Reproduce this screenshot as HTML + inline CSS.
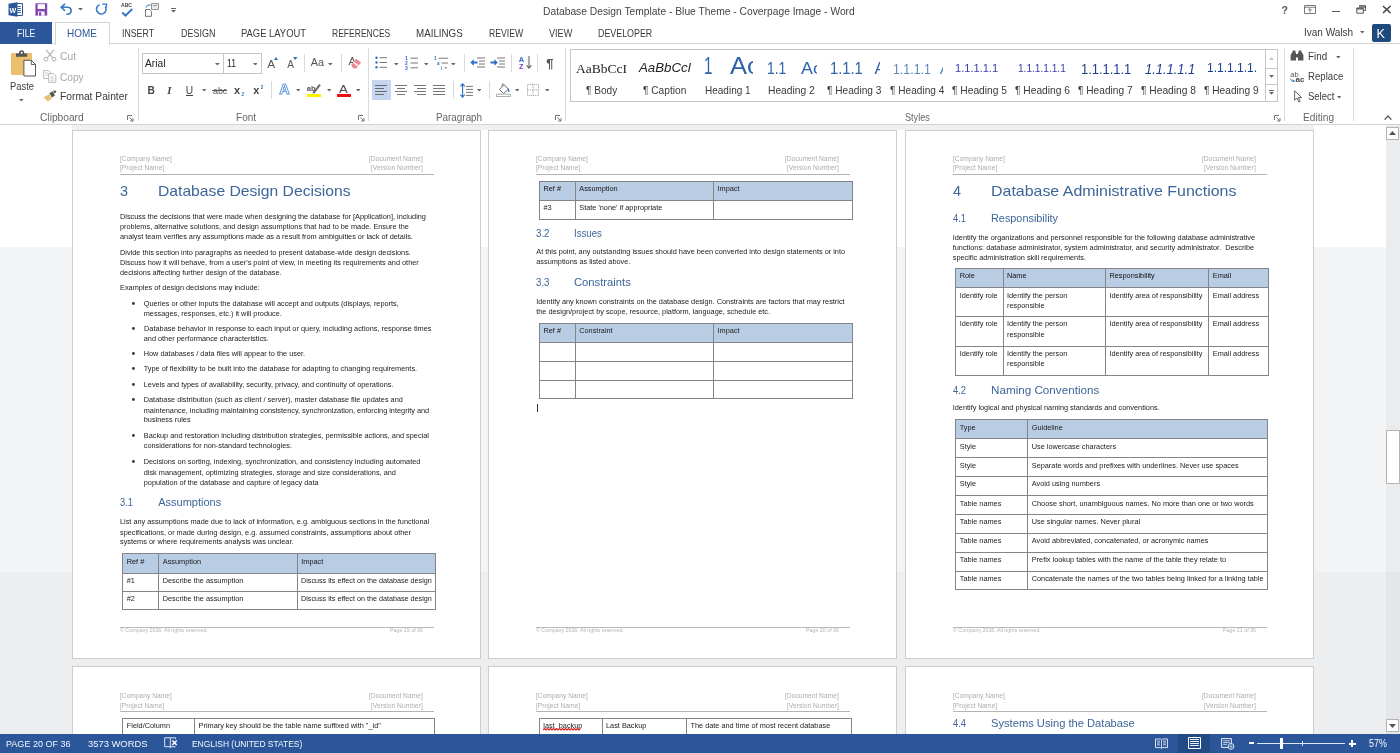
<!DOCTYPE html>
<html lang="en"><head><meta charset="utf-8"><title>Database Design Template - Word</title>
<style>
html,body{margin:0;padding:0}
body{width:1400px;height:753px;overflow:hidden;position:relative;background:#fff;font-family:"Liberation Sans",sans-serif}
#app{position:absolute;left:0;top:0;width:1400px;height:753px;overflow:hidden;will-change:transform}
.t{position:absolute;white-space:pre;margin:0;padding:0}
.r{position:absolute;box-sizing:border-box;margin:0;padding:0;display:block}
</style></head>
<body>
<div id="app">
<div class="r" style="left:0px;top:125px;width:1400px;height:122px;background:#ffffff;"></div>
<div class="r" style="left:0px;top:247px;width:1400px;height:325px;background:#f3f4f5;"></div>
<div class="r" style="left:0px;top:572px;width:1400px;height:162px;background:#edeef0;"></div>
<div class="r" style="left:72px;top:125px;width:1242px;height:5px;background:#eff0f2;"></div>
<div class="r" style="left:1386px;top:125px;width:14px;height:447px;background:#ebecee;"></div>
<div class="r" style="left:1386px;top:572px;width:14px;height:162px;background:#e5e6e8;"></div>
<div class="r" style="left:1386px;top:127px;width:13px;height:13px;background:#fff;border:1px solid #b4b4b4;"></div>
<svg class="r" style="left:1389px;top:131px" width="7" height="4" viewBox="0 0 7 4"><path d="M0 4H7L3.5 0Z" fill="#555"/></svg>
<div class="r" style="left:1386px;top:719px;width:13px;height:13px;background:#fff;border:1px solid #b4b4b4;"></div>
<svg class="r" style="left:1389px;top:724px" width="7" height="4" viewBox="0 0 7 4"><path d="M0 0H7L3.5 4Z" fill="#555"/></svg>
<div class="r" style="left:1386px;top:430px;width:14px;height:54px;background:#fff;border:1px solid #b4b4b4;"></div>
<div class="r" style="left:72px;top:130px;width:409px;height:529px;background:#fff;border:1px solid #cdcdcd;"></div>
<div class="t" style='left:120.00px;top:155px;font:400 6.5px "Liberation Sans", sans-serif;line-height:7px;color:#adadad;transform:scaleX(1.0232);transform-origin:0 0;'>[Company Name]</div>
<div class="t" style='left:120.00px;top:164px;font:400 6.5px "Liberation Sans", sans-serif;line-height:7px;color:#adadad;transform:scaleX(1.0294);transform-origin:0 0;'>[Project Name]</div>
<div class="t" style='left:369.25px;top:155px;font:400 6.5px "Liberation Sans", sans-serif;line-height:7px;color:#adadad;transform:scaleX(1.0261);transform-origin:0 0;'>[Document Name]</div>
<div class="t" style='left:371.25px;top:164px;font:400 6.5px "Liberation Sans", sans-serif;line-height:7px;color:#adadad;transform:scaleX(1.0305);transform-origin:0 0;'>[Version Number]</div>
<div class="r" style="left:120px;top:174px;width:314px;height:1px;background:#b4b4b4;"></div>
<div class="t" style='left:120.00px;top:183px;font:400 14.4px "Liberation Sans", sans-serif;line-height:16px;color:#3d6598;'>3</div>
<div class="t" style='left:158.20px;top:183px;font:400 14.4px "Liberation Sans", sans-serif;line-height:16px;color:#3d6598;transform:scaleX(1.0892);transform-origin:0 0;'>Database Design Decisions</div>
<div class="t" style='left:120.00px;top:212px;font:400 7.34px "Liberation Sans", sans-serif;line-height:9px;color:#1b1b1b;'>Discuss the decisions that were made when designing the database for [Application], including</div>
<div class="t" style='left:120.00px;top:222px;font:400 7.34px "Liberation Sans", sans-serif;line-height:9px;color:#1b1b1b;'>problems, alternative solutions, and design assumptions that had to be made. Ensure the</div>
<div class="t" style='left:120.00px;top:232px;font:400 7.34px "Liberation Sans", sans-serif;line-height:9px;color:#1b1b1b;'>analyst team verifies any assumptions made as a result from ambiguities or lack of details.</div>
<div class="t" style='left:120.00px;top:248px;font:400 7.34px "Liberation Sans", sans-serif;line-height:9px;color:#1b1b1b;'>Divide this section into paragraphs as needed to present database-wide design decisions.</div>
<div class="t" style='left:120.00px;top:258px;font:400 7.34px "Liberation Sans", sans-serif;line-height:9px;color:#1b1b1b;'>Discuss how it will behave, from a user's point of view, in meeting its requirements and other</div>
<div class="t" style='left:120.00px;top:268px;font:400 7.34px "Liberation Sans", sans-serif;line-height:9px;color:#1b1b1b;'>decisions affecting further design of the database.</div>
<div class="t" style='left:120.00px;top:283px;font:400 7.34px "Liberation Sans", sans-serif;line-height:9px;color:#1b1b1b;'>Examples of design decisions may include:</div>
<div class="t" style='left:143.75px;top:299px;font:400 7.34px "Liberation Sans", sans-serif;line-height:9px;color:#1b1b1b;'>Queries or other inputs the database will accept and outputs (displays, reports,</div>
<div class="t" style='left:143.75px;top:309px;font:400 7.34px "Liberation Sans", sans-serif;line-height:9px;color:#1b1b1b;'>messages, responses, etc.) it will produce.</div>
<div class="t" style='left:143.75px;top:324px;font:400 7.34px "Liberation Sans", sans-serif;line-height:9px;color:#1b1b1b;transform:scaleX(1.0058);transform-origin:0 0;'>Database behavior in response to each input or query, including actions, response times</div>
<div class="t" style='left:143.75px;top:334px;font:400 7.34px "Liberation Sans", sans-serif;line-height:9px;color:#1b1b1b;'>and other performance characteristics.</div>
<div class="t" style='left:143.75px;top:349px;font:400 7.34px "Liberation Sans", sans-serif;line-height:9px;color:#1b1b1b;'>How databases / data files will appear to the user.</div>
<div class="t" style='left:143.75px;top:364px;font:400 7.34px "Liberation Sans", sans-serif;line-height:9px;color:#1b1b1b;'>Type of flexibility to be built into the database for adapting to changing requirements.</div>
<div class="t" style='left:143.75px;top:380px;font:400 7.34px "Liberation Sans", sans-serif;line-height:9px;color:#1b1b1b;'>Levels and types of availability, security, privacy, and continuity of operations.</div>
<div class="t" style='left:143.75px;top:395px;font:400 7.34px "Liberation Sans", sans-serif;line-height:9px;color:#1b1b1b;'>Database distribution (such as client / server), master database file updates and</div>
<div class="t" style='left:143.75px;top:406px;font:400 7.34px "Liberation Sans", sans-serif;line-height:9px;color:#1b1b1b;'>maintenance, including maintaining consistency, synchronization, enforcing integrity and</div>
<div class="t" style='left:143.75px;top:415px;font:400 7.34px "Liberation Sans", sans-serif;line-height:9px;color:#1b1b1b;'>business rules</div>
<div class="t" style='left:143.75px;top:431px;font:400 7.34px "Liberation Sans", sans-serif;line-height:9px;color:#1b1b1b;'>Backup and restoration including distribution strategies, permissible actions, and special</div>
<div class="t" style='left:143.75px;top:441px;font:400 7.34px "Liberation Sans", sans-serif;line-height:9px;color:#1b1b1b;'>considerations for non-standard technologies.</div>
<div class="t" style='left:143.75px;top:457px;font:400 7.34px "Liberation Sans", sans-serif;line-height:9px;color:#1b1b1b;'>Decisions on sorting, indexing, synchronization, and consistency including automated</div>
<div class="t" style='left:143.75px;top:468px;font:400 7.34px "Liberation Sans", sans-serif;line-height:9px;color:#1b1b1b;'>disk management, optimizing strategies, storage and size considerations, and</div>
<div class="t" style='left:143.75px;top:478px;font:400 7.34px "Liberation Sans", sans-serif;line-height:9px;color:#1b1b1b;'>population of the database and capture of legacy data</div>
<div class="t" style='left:120.00px;top:517px;font:400 7.34px "Liberation Sans", sans-serif;line-height:9px;color:#1b1b1b;'>List any assumptions made due to lack of information, e.g. ambiguous sections in the functional</div>
<div class="t" style='left:120.00px;top:528px;font:400 7.34px "Liberation Sans", sans-serif;line-height:9px;color:#1b1b1b;'>specifications, or made during design, e.g. assumed constraints, assumptions about other</div>
<div class="t" style='left:120.00px;top:537px;font:400 7.34px "Liberation Sans", sans-serif;line-height:9px;color:#1b1b1b;'>systems or where requirements analysis was unclear.</div>
<svg class="r" style="left:131px;top:301px" width="5" height="5" viewBox="0 0 5 5"><circle cx="2.4" cy="2.5" r="1.4" fill="#333"/></svg>
<svg class="r" style="left:131px;top:326px" width="5" height="5" viewBox="0 0 5 5"><circle cx="2.4" cy="2.5" r="1.4" fill="#333"/></svg>
<svg class="r" style="left:131px;top:351px" width="5" height="5" viewBox="0 0 5 5"><circle cx="2.4" cy="2.5" r="1.4" fill="#333"/></svg>
<svg class="r" style="left:131px;top:366px" width="5" height="5" viewBox="0 0 5 5"><circle cx="2.4" cy="2.5" r="1.4" fill="#333"/></svg>
<svg class="r" style="left:131px;top:382px" width="5" height="5" viewBox="0 0 5 5"><circle cx="2.4" cy="2.5" r="1.4" fill="#333"/></svg>
<svg class="r" style="left:131px;top:397px" width="5" height="5" viewBox="0 0 5 5"><circle cx="2.4" cy="2.5" r="1.4" fill="#333"/></svg>
<svg class="r" style="left:131px;top:433px" width="5" height="5" viewBox="0 0 5 5"><circle cx="2.4" cy="2.5" r="1.4" fill="#333"/></svg>
<svg class="r" style="left:131px;top:459px" width="5" height="5" viewBox="0 0 5 5"><circle cx="2.4" cy="2.5" r="1.4" fill="#333"/></svg>
<div class="t" style='left:120.00px;top:496px;font:400 11px "Liberation Sans", sans-serif;line-height:12px;color:#3d6598;transform:scaleX(0.8501);transform-origin:0 0;'>3.1</div>
<div class="t" style='left:158.20px;top:496px;font:400 11px "Liberation Sans", sans-serif;line-height:12px;color:#3d6598;'>Assumptions</div>
<div class="r" style="left:122px;top:553px;width:314px;height:21px;background:#b8cce4;"></div>
<div class="r" style="left:122px;top:553px;width:314px;height:1px;background:#858585;"></div>
<div class="r" style="left:122px;top:573px;width:314px;height:1px;background:#858585;"></div>
<div class="r" style="left:122px;top:591px;width:314px;height:1px;background:#858585;"></div>
<div class="r" style="left:122px;top:609px;width:314px;height:1px;background:#858585;"></div>
<div class="r" style="left:122px;top:553px;width:1px;height:57px;background:#858585;"></div>
<div class="r" style="left:158px;top:553px;width:1px;height:57px;background:#858585;"></div>
<div class="r" style="left:297px;top:553px;width:1px;height:57px;background:#858585;"></div>
<div class="r" style="left:435px;top:553px;width:1px;height:57px;background:#858585;"></div>
<div class="t" style='left:126.75px;top:557px;font:400 7.34px "Liberation Sans", sans-serif;line-height:9px;color:#111;'>Ref #</div>
<div class="t" style='left:162.75px;top:557px;font:400 7.34px "Liberation Sans", sans-serif;line-height:9px;color:#1b1b1b;'>Assumption</div>
<div class="t" style='left:301.25px;top:557px;font:400 7.34px "Liberation Sans", sans-serif;line-height:9px;color:#1b1b1b;'>Impact</div>
<div class="t" style='left:126.75px;top:576px;font:400 7.34px "Liberation Sans", sans-serif;line-height:9px;color:#1b1b1b;'>#1</div>
<div class="t" style='left:162.75px;top:576px;font:400 7.34px "Liberation Sans", sans-serif;line-height:9px;color:#1b1b1b;'>Describe the assumption</div>
<div class="t" style='left:301.25px;top:576px;font:400 7.34px "Liberation Sans", sans-serif;line-height:9px;color:#1b1b1b;transform:scaleX(0.9825);transform-origin:0 0;'>Discuss its effect on the database design</div>
<div class="t" style='left:126.75px;top:594px;font:400 7.34px "Liberation Sans", sans-serif;line-height:9px;color:#1b1b1b;'>#2</div>
<div class="t" style='left:162.75px;top:594px;font:400 7.34px "Liberation Sans", sans-serif;line-height:9px;color:#1b1b1b;'>Describe the assumption</div>
<div class="t" style='left:301.25px;top:594px;font:400 7.34px "Liberation Sans", sans-serif;line-height:9px;color:#1b1b1b;transform:scaleX(0.9825);transform-origin:0 0;'>Discuss its effect on the database design</div>
<div class="r" style="left:120px;top:627px;width:314px;height:1px;background:#b9b9b9;"></div>
<div class="t" style='left:120.00px;top:627px;font:400 5.3px "Liberation Sans", sans-serif;line-height:6px;color:#b4b4b4;'>© Company 2016. All rights reserved.</div>
<div class="t" style='left:390.00px;top:627px;font:400 5.3px "Liberation Sans", sans-serif;line-height:6px;color:#b4b4b4;'>Page 19 of 36</div>
<div class="r" style="left:488px;top:130px;width:409px;height:529px;background:#fff;border:1px solid #cdcdcd;"></div>
<div class="t" style='left:536.00px;top:155px;font:400 6.5px "Liberation Sans", sans-serif;line-height:7px;color:#adadad;transform:scaleX(1.0232);transform-origin:0 0;'>[Company Name]</div>
<div class="t" style='left:536.00px;top:164px;font:400 6.5px "Liberation Sans", sans-serif;line-height:7px;color:#adadad;transform:scaleX(1.0294);transform-origin:0 0;'>[Project Name]</div>
<div class="t" style='left:785.25px;top:155px;font:400 6.5px "Liberation Sans", sans-serif;line-height:7px;color:#adadad;transform:scaleX(1.0261);transform-origin:0 0;'>[Document Name]</div>
<div class="t" style='left:787.25px;top:164px;font:400 6.5px "Liberation Sans", sans-serif;line-height:7px;color:#adadad;transform:scaleX(1.0305);transform-origin:0 0;'>[Version Number]</div>
<div class="r" style="left:536px;top:174px;width:314px;height:1px;background:#b4b4b4;"></div>
<div class="r" style="left:539px;top:181px;width:314px;height:20px;background:#b8cce4;"></div>
<div class="r" style="left:539px;top:181px;width:314px;height:1px;background:#858585;"></div>
<div class="r" style="left:539px;top:200px;width:314px;height:1px;background:#858585;"></div>
<div class="r" style="left:539px;top:219px;width:314px;height:1px;background:#858585;"></div>
<div class="r" style="left:539px;top:181px;width:1px;height:39px;background:#858585;"></div>
<div class="r" style="left:575px;top:181px;width:1px;height:39px;background:#858585;"></div>
<div class="r" style="left:713px;top:181px;width:1px;height:39px;background:#858585;"></div>
<div class="r" style="left:852px;top:181px;width:1px;height:39px;background:#858585;"></div>
<div class="t" style='left:543.50px;top:184px;font:400 7.34px "Liberation Sans", sans-serif;line-height:9px;color:#111;'>Ref #</div>
<div class="t" style='left:579.25px;top:184px;font:400 7.34px "Liberation Sans", sans-serif;line-height:9px;color:#1b1b1b;'>Assumption</div>
<div class="t" style='left:717.50px;top:184px;font:400 7.34px "Liberation Sans", sans-serif;line-height:9px;color:#1b1b1b;'>Impact</div>
<div class="t" style='left:543.50px;top:203px;font:400 7.34px "Liberation Sans", sans-serif;line-height:9px;color:#1b1b1b;'>#3</div>
<div class="t" style='left:579.25px;top:203px;font:400 7.34px "Liberation Sans", sans-serif;line-height:9px;color:#1b1b1b;'>State 'none' if appropriate</div>
<div class="t" style='left:536.00px;top:227px;font:400 11px "Liberation Sans", sans-serif;line-height:12px;color:#3d6598;transform:scaleX(0.8828);transform-origin:0 0;'>3.2</div>
<div class="t" style='left:574.20px;top:227px;font:400 11px "Liberation Sans", sans-serif;line-height:12px;color:#3d6598;transform:scaleX(0.8744);transform-origin:0 0;'>Issues</div>
<div class="t" style='left:536.25px;top:247px;font:400 7.34px "Liberation Sans", sans-serif;line-height:9px;color:#1b1b1b;'>At this point, any outstanding issues should have been converted into design statements or into</div>
<div class="t" style='left:536.25px;top:257px;font:400 7.34px "Liberation Sans", sans-serif;line-height:9px;color:#1b1b1b;'>assumptions as listed above.</div>
<div class="t" style='left:536.00px;top:276px;font:400 11px "Liberation Sans", sans-serif;line-height:12px;color:#3d6598;transform:scaleX(0.8828);transform-origin:0 0;'>3.3</div>
<div class="t" style='left:574.20px;top:276px;font:400 11px "Liberation Sans", sans-serif;line-height:12px;color:#3d6598;transform:scaleX(1.0210);transform-origin:0 0;'>Constraints</div>
<div class="t" style='left:536.25px;top:297px;font:400 7.34px "Liberation Sans", sans-serif;line-height:9px;color:#1b1b1b;'>Identify any known constraints on the database design. Constraints are factors that may restrict</div>
<div class="t" style='left:536.25px;top:307px;font:400 7.34px "Liberation Sans", sans-serif;line-height:9px;color:#1b1b1b;'>the design/project by scope, resource, platform, language, schedule etc.</div>
<div class="r" style="left:539px;top:323px;width:314px;height:20px;background:#b8cce4;"></div>
<div class="r" style="left:539px;top:323px;width:314px;height:1px;background:#858585;"></div>
<div class="r" style="left:539px;top:342px;width:314px;height:1px;background:#858585;"></div>
<div class="r" style="left:539px;top:361px;width:314px;height:1px;background:#858585;"></div>
<div class="r" style="left:539px;top:380px;width:314px;height:1px;background:#858585;"></div>
<div class="r" style="left:539px;top:398px;width:314px;height:1px;background:#858585;"></div>
<div class="r" style="left:539px;top:323px;width:1px;height:76px;background:#858585;"></div>
<div class="r" style="left:575px;top:323px;width:1px;height:76px;background:#858585;"></div>
<div class="r" style="left:713px;top:323px;width:1px;height:76px;background:#858585;"></div>
<div class="r" style="left:852px;top:323px;width:1px;height:76px;background:#858585;"></div>
<div class="t" style='left:543.50px;top:326px;font:400 7.34px "Liberation Sans", sans-serif;line-height:9px;color:#111;'>Ref #</div>
<div class="t" style='left:579.25px;top:326px;font:400 7.34px "Liberation Sans", sans-serif;line-height:9px;color:#1b1b1b;'>Constraint</div>
<div class="t" style='left:717.50px;top:326px;font:400 7.34px "Liberation Sans", sans-serif;line-height:9px;color:#1b1b1b;'>Impact</div>
<div class="r" style="left:536.5px;top:404px;width:1px;height:7.5px;background:#333;"></div>
<div class="r" style="left:536px;top:627px;width:314px;height:1px;background:#b9b9b9;"></div>
<div class="t" style='left:536.00px;top:627px;font:400 5.3px "Liberation Sans", sans-serif;line-height:6px;color:#b4b4b4;'>© Company 2016. All rights reserved.</div>
<div class="t" style='left:806.00px;top:627px;font:400 5.3px "Liberation Sans", sans-serif;line-height:6px;color:#b4b4b4;'>Page 20 of 36</div>
<div class="r" style="left:905px;top:130px;width:409px;height:529px;background:#fff;border:1px solid #cdcdcd;"></div>
<div class="t" style='left:953.00px;top:155px;font:400 6.5px "Liberation Sans", sans-serif;line-height:7px;color:#adadad;transform:scaleX(1.0232);transform-origin:0 0;'>[Company Name]</div>
<div class="t" style='left:953.00px;top:164px;font:400 6.5px "Liberation Sans", sans-serif;line-height:7px;color:#adadad;transform:scaleX(1.0294);transform-origin:0 0;'>[Project Name]</div>
<div class="t" style='left:1202.25px;top:155px;font:400 6.5px "Liberation Sans", sans-serif;line-height:7px;color:#adadad;transform:scaleX(1.0261);transform-origin:0 0;'>[Document Name]</div>
<div class="t" style='left:1204.25px;top:164px;font:400 6.5px "Liberation Sans", sans-serif;line-height:7px;color:#adadad;transform:scaleX(1.0305);transform-origin:0 0;'>[Version Number]</div>
<div class="r" style="left:953px;top:174px;width:314px;height:1px;background:#b4b4b4;"></div>
<div class="t" style='left:953.00px;top:183px;font:400 14.4px "Liberation Sans", sans-serif;line-height:16px;color:#3d6598;'>4</div>
<div class="t" style='left:991.20px;top:183px;font:400 14.4px "Liberation Sans", sans-serif;line-height:16px;color:#3d6598;transform:scaleX(1.1077);transform-origin:0 0;'>Database Administrative Functions</div>
<div class="t" style='left:953.00px;top:212px;font:400 11px "Liberation Sans", sans-serif;line-height:12px;color:#3d6598;transform:scaleX(0.8501);transform-origin:0 0;'>4.1</div>
<div class="t" style='left:991.20px;top:212px;font:400 11px "Liberation Sans", sans-serif;line-height:12px;color:#3d6598;transform:scaleX(0.9880);transform-origin:0 0;'>Responsibility</div>
<div class="t" style='left:952.75px;top:233px;font:400 7.34px "Liberation Sans", sans-serif;line-height:9px;color:#1b1b1b;'>Identify the organizations and personnel responsible for the following database administrative</div>
<div class="t" style='left:952.75px;top:243px;font:400 7.34px "Liberation Sans", sans-serif;line-height:9px;color:#1b1b1b;'>functions: database administrator, system administrator, and security administrator.  Describe</div>
<div class="t" style='left:952.75px;top:253px;font:400 7.34px "Liberation Sans", sans-serif;line-height:9px;color:#1b1b1b;'>specific administration skill requirements.</div>
<div class="r" style="left:955px;top:268px;width:314px;height:20px;background:#b8cce4;"></div>
<div class="r" style="left:955px;top:268px;width:314px;height:1px;background:#858585;"></div>
<div class="r" style="left:955px;top:287px;width:314px;height:1px;background:#858585;"></div>
<div class="r" style="left:955px;top:316px;width:314px;height:1px;background:#858585;"></div>
<div class="r" style="left:955px;top:346px;width:314px;height:1px;background:#858585;"></div>
<div class="r" style="left:955px;top:375px;width:314px;height:1px;background:#858585;"></div>
<div class="r" style="left:955px;top:268px;width:1px;height:108px;background:#858585;"></div>
<div class="r" style="left:1003px;top:268px;width:1px;height:108px;background:#858585;"></div>
<div class="r" style="left:1105px;top:268px;width:1px;height:108px;background:#858585;"></div>
<div class="r" style="left:1208px;top:268px;width:1px;height:108px;background:#858585;"></div>
<div class="r" style="left:1268px;top:268px;width:1px;height:108px;background:#858585;"></div>
<div class="t" style='left:959.75px;top:271px;font:400 7.34px "Liberation Sans", sans-serif;line-height:9px;color:#111;'>Role</div>
<div class="t" style='left:1007.00px;top:271px;font:400 7.34px "Liberation Sans", sans-serif;line-height:9px;color:#111;'>Name</div>
<div class="t" style='left:1109.50px;top:271px;font:400 7.34px "Liberation Sans", sans-serif;line-height:9px;color:#111;'>Responsibility</div>
<div class="t" style='left:1212.75px;top:271px;font:400 7.34px "Liberation Sans", sans-serif;line-height:9px;color:#111;'>Email</div>
<div class="t" style='left:959.75px;top:291px;font:400 7.34px "Liberation Sans", sans-serif;line-height:9px;color:#1b1b1b;'>Identify role</div>
<div class="t" style='left:1007.00px;top:291px;font:400 7.34px "Liberation Sans", sans-serif;line-height:9px;color:#1b1b1b;'>Identify the person</div>
<div class="t" style='left:1007.00px;top:301px;font:400 7.34px "Liberation Sans", sans-serif;line-height:9px;color:#1b1b1b;'>responsible</div>
<div class="t" style='left:1109.50px;top:291px;font:400 7.34px "Liberation Sans", sans-serif;line-height:9px;color:#1b1b1b;'>Identify area of responsibility</div>
<div class="t" style='left:1212.75px;top:291px;font:400 7.34px "Liberation Sans", sans-serif;line-height:9px;color:#1b1b1b;'>Email address</div>
<div class="t" style='left:959.75px;top:319px;font:400 7.34px "Liberation Sans", sans-serif;line-height:9px;color:#1b1b1b;'>Identify role</div>
<div class="t" style='left:1007.00px;top:319px;font:400 7.34px "Liberation Sans", sans-serif;line-height:9px;color:#1b1b1b;'>Identify the person</div>
<div class="t" style='left:1007.00px;top:330px;font:400 7.34px "Liberation Sans", sans-serif;line-height:9px;color:#1b1b1b;'>responsible</div>
<div class="t" style='left:1109.50px;top:319px;font:400 7.34px "Liberation Sans", sans-serif;line-height:9px;color:#1b1b1b;'>Identify area of responsibility</div>
<div class="t" style='left:1212.75px;top:319px;font:400 7.34px "Liberation Sans", sans-serif;line-height:9px;color:#1b1b1b;'>Email address</div>
<div class="t" style='left:959.75px;top:349px;font:400 7.34px "Liberation Sans", sans-serif;line-height:9px;color:#1b1b1b;'>Identify role</div>
<div class="t" style='left:1007.00px;top:349px;font:400 7.34px "Liberation Sans", sans-serif;line-height:9px;color:#1b1b1b;'>Identify the person</div>
<div class="t" style='left:1007.00px;top:359px;font:400 7.34px "Liberation Sans", sans-serif;line-height:9px;color:#1b1b1b;'>responsible</div>
<div class="t" style='left:1109.50px;top:349px;font:400 7.34px "Liberation Sans", sans-serif;line-height:9px;color:#1b1b1b;'>Identify area of responsibility</div>
<div class="t" style='left:1212.75px;top:349px;font:400 7.34px "Liberation Sans", sans-serif;line-height:9px;color:#1b1b1b;'>Email address</div>
<div class="t" style='left:953.00px;top:384px;font:400 11px "Liberation Sans", sans-serif;line-height:12px;color:#3d6598;transform:scaleX(0.8501);transform-origin:0 0;'>4.2</div>
<div class="t" style='left:991.20px;top:384px;font:400 11px "Liberation Sans", sans-serif;line-height:12px;color:#3d6598;transform:scaleX(1.0606);transform-origin:0 0;'>Naming Conventions</div>
<div class="t" style='left:952.75px;top:403px;font:400 7.34px "Liberation Sans", sans-serif;line-height:9px;color:#1b1b1b;'>Identify logical and physical naming standards and conventions.</div>
<div class="r" style="left:955px;top:419px;width:313px;height:20px;background:#b8cce4;"></div>
<div class="r" style="left:955px;top:419px;width:313px;height:1px;background:#858585;"></div>
<div class="r" style="left:955px;top:438px;width:313px;height:1px;background:#858585;"></div>
<div class="r" style="left:955px;top:457px;width:313px;height:1px;background:#858585;"></div>
<div class="r" style="left:955px;top:476px;width:313px;height:1px;background:#858585;"></div>
<div class="r" style="left:955px;top:495px;width:313px;height:1px;background:#858585;"></div>
<div class="r" style="left:955px;top:514px;width:313px;height:1px;background:#858585;"></div>
<div class="r" style="left:955px;top:533px;width:313px;height:1px;background:#858585;"></div>
<div class="r" style="left:955px;top:552px;width:313px;height:1px;background:#858585;"></div>
<div class="r" style="left:955px;top:571px;width:313px;height:1px;background:#858585;"></div>
<div class="r" style="left:955px;top:589px;width:313px;height:1px;background:#858585;"></div>
<div class="r" style="left:955px;top:419px;width:1px;height:171px;background:#858585;"></div>
<div class="r" style="left:1027px;top:419px;width:1px;height:171px;background:#858585;"></div>
<div class="r" style="left:1267px;top:419px;width:1px;height:171px;background:#858585;"></div>
<div class="t" style='left:959.75px;top:423px;font:400 7.34px "Liberation Sans", sans-serif;line-height:9px;color:#1b1b1b;'>Type</div>
<div class="t" style='left:1031.75px;top:423px;font:400 7.34px "Liberation Sans", sans-serif;line-height:9px;color:#1b1b1b;'>Guideline</div>
<div class="t" style='left:959.75px;top:442px;font:400 7.34px "Liberation Sans", sans-serif;line-height:9px;color:#1b1b1b;'>Style</div>
<div class="t" style='left:1031.75px;top:442px;font:400 7.34px "Liberation Sans", sans-serif;line-height:9px;color:#1b1b1b;'>Use lowercase characters</div>
<div class="t" style='left:959.75px;top:461px;font:400 7.34px "Liberation Sans", sans-serif;line-height:9px;color:#1b1b1b;'>Style</div>
<div class="t" style='left:1031.75px;top:461px;font:400 7.34px "Liberation Sans", sans-serif;line-height:9px;color:#1b1b1b;'>Separate words and prefixes with underlines. Never use spaces</div>
<div class="t" style='left:959.75px;top:479px;font:400 7.34px "Liberation Sans", sans-serif;line-height:9px;color:#1b1b1b;'>Style</div>
<div class="t" style='left:1031.75px;top:479px;font:400 7.34px "Liberation Sans", sans-serif;line-height:9px;color:#1b1b1b;'>Avoid using numbers</div>
<div class="t" style='left:959.75px;top:499px;font:400 7.34px "Liberation Sans", sans-serif;line-height:9px;color:#1b1b1b;'>Table names</div>
<div class="t" style='left:1031.75px;top:499px;font:400 7.34px "Liberation Sans", sans-serif;line-height:9px;color:#1b1b1b;'>Choose short, unambiguous names. No more than one or two words</div>
<div class="t" style='left:959.75px;top:517px;font:400 7.34px "Liberation Sans", sans-serif;line-height:9px;color:#1b1b1b;'>Table names</div>
<div class="t" style='left:1031.75px;top:517px;font:400 7.34px "Liberation Sans", sans-serif;line-height:9px;color:#1b1b1b;'>Use singular names. Never plural</div>
<div class="t" style='left:959.75px;top:536px;font:400 7.34px "Liberation Sans", sans-serif;line-height:9px;color:#1b1b1b;'>Table names</div>
<div class="t" style='left:1031.75px;top:536px;font:400 7.34px "Liberation Sans", sans-serif;line-height:9px;color:#1b1b1b;'>Avoid abbreviated, concatenated, or acronymic names</div>
<div class="t" style='left:959.75px;top:555px;font:400 7.34px "Liberation Sans", sans-serif;line-height:9px;color:#1b1b1b;'>Table names</div>
<div class="t" style='left:1031.75px;top:555px;font:400 7.34px "Liberation Sans", sans-serif;line-height:9px;color:#1b1b1b;'>Prefix lookup tables with the name of the table they relate to</div>
<div class="t" style='left:959.75px;top:574px;font:400 7.34px "Liberation Sans", sans-serif;line-height:9px;color:#1b1b1b;'>Table names</div>
<div class="t" style='left:1031.75px;top:574px;font:400 7.34px "Liberation Sans", sans-serif;line-height:9px;color:#1b1b1b;'>Concatenate the names of the two tables being linked for a linking table</div>
<div class="r" style="left:953px;top:627px;width:314px;height:1px;background:#b9b9b9;"></div>
<div class="t" style='left:953.00px;top:627px;font:400 5.3px "Liberation Sans", sans-serif;line-height:6px;color:#b4b4b4;'>© Company 2016. All rights reserved.</div>
<div class="t" style='left:1223.00px;top:627px;font:400 5.3px "Liberation Sans", sans-serif;line-height:6px;color:#b4b4b4;'>Page 21 of 36</div>
<div class="r" style="left:72px;top:666px;width:409px;height:120px;background:#fff;border:1px solid #cdcdcd;"></div>
<div class="t" style='left:120.00px;top:692px;font:400 6.5px "Liberation Sans", sans-serif;line-height:7px;color:#adadad;transform:scaleX(1.0232);transform-origin:0 0;'>[Company Name]</div>
<div class="t" style='left:120.00px;top:702px;font:400 6.5px "Liberation Sans", sans-serif;line-height:7px;color:#adadad;transform:scaleX(1.0294);transform-origin:0 0;'>[Project Name]</div>
<div class="t" style='left:369.25px;top:692px;font:400 6.5px "Liberation Sans", sans-serif;line-height:7px;color:#adadad;transform:scaleX(1.0261);transform-origin:0 0;'>[Document Name]</div>
<div class="t" style='left:371.25px;top:702px;font:400 6.5px "Liberation Sans", sans-serif;line-height:7px;color:#adadad;transform:scaleX(1.0305);transform-origin:0 0;'>[Version Number]</div>
<div class="r" style="left:120px;top:711px;width:314px;height:1px;background:#b4b4b4;"></div>
<div class="r" style="left:122px;top:718px;width:313px;height:1px;background:#858585;"></div>
<div class="r" style="left:122px;top:760px;width:313px;height:1px;background:#858585;"></div>
<div class="r" style="left:122px;top:718px;width:1px;height:43px;background:#858585;"></div>
<div class="r" style="left:194px;top:718px;width:1px;height:43px;background:#858585;"></div>
<div class="r" style="left:434px;top:718px;width:1px;height:43px;background:#858585;"></div>
<div class="t" style='left:126.80px;top:721px;font:400 7.34px "Liberation Sans", sans-serif;line-height:9px;color:#1b1b1b;'>Field/Column</div>
<div class="t" style='left:198.60px;top:721px;font:400 7.34px "Liberation Sans", sans-serif;line-height:9px;color:#1b1b1b;'>Primary key should be the table name suffixed with "_id"</div>
<div class="r" style="left:488px;top:666px;width:409px;height:120px;background:#fff;border:1px solid #cdcdcd;"></div>
<div class="t" style='left:536.00px;top:692px;font:400 6.5px "Liberation Sans", sans-serif;line-height:7px;color:#adadad;transform:scaleX(1.0232);transform-origin:0 0;'>[Company Name]</div>
<div class="t" style='left:536.00px;top:702px;font:400 6.5px "Liberation Sans", sans-serif;line-height:7px;color:#adadad;transform:scaleX(1.0294);transform-origin:0 0;'>[Project Name]</div>
<div class="t" style='left:785.25px;top:692px;font:400 6.5px "Liberation Sans", sans-serif;line-height:7px;color:#adadad;transform:scaleX(1.0261);transform-origin:0 0;'>[Document Name]</div>
<div class="t" style='left:787.25px;top:702px;font:400 6.5px "Liberation Sans", sans-serif;line-height:7px;color:#adadad;transform:scaleX(1.0305);transform-origin:0 0;'>[Version Number]</div>
<div class="r" style="left:536px;top:711px;width:314px;height:1px;background:#b4b4b4;"></div>
<div class="r" style="left:539px;top:718px;width:313px;height:1px;background:#858585;"></div>
<div class="r" style="left:539px;top:760px;width:313px;height:1px;background:#858585;"></div>
<div class="r" style="left:539px;top:718px;width:1px;height:43px;background:#858585;"></div>
<div class="r" style="left:602px;top:718px;width:1px;height:43px;background:#858585;"></div>
<div class="r" style="left:686px;top:718px;width:1px;height:43px;background:#858585;"></div>
<div class="r" style="left:851px;top:718px;width:1px;height:43px;background:#858585;"></div>
<div class="t" style='left:543.30px;top:721px;font:400 7.34px "Liberation Sans", sans-serif;line-height:9px;color:#1b1b1b;'>last_backup</div>
<svg class="r" style="left:543px;top:728px" width="38" height="3" viewBox="0 0 38 3"><path d="M0 2 L1.5 0.5 L3 2 L4.5 0.5 L6 2 L7.5 0.5 L9 2 L10.5 0.5 L12 2 L13.5 0.5 L15 2 L16.5 0.5 L18 2 L19.5 0.5 L21 2 L22.5 0.5 L24 2 L25.5 0.5 L27 2 L28.5 0.5 L30 2 L31.5 0.5 L33 2 L34.5 0.5 L36 2 L37.5 0.5" fill="none" stroke="#d81e1e" stroke-width="1.1"/></svg>
<div class="t" style='left:606.00px;top:721px;font:400 7.34px "Liberation Sans", sans-serif;line-height:9px;color:#1b1b1b;'>Last Backup</div>
<div class="t" style='left:690.50px;top:721px;font:400 7.34px "Liberation Sans", sans-serif;line-height:9px;color:#1b1b1b;'>The date and time of most recent database</div>
<div class="r" style="left:905px;top:666px;width:409px;height:120px;background:#fff;border:1px solid #cdcdcd;"></div>
<div class="t" style='left:953.00px;top:692px;font:400 6.5px "Liberation Sans", sans-serif;line-height:7px;color:#adadad;transform:scaleX(1.0232);transform-origin:0 0;'>[Company Name]</div>
<div class="t" style='left:953.00px;top:702px;font:400 6.5px "Liberation Sans", sans-serif;line-height:7px;color:#adadad;transform:scaleX(1.0294);transform-origin:0 0;'>[Project Name]</div>
<div class="t" style='left:1202.25px;top:692px;font:400 6.5px "Liberation Sans", sans-serif;line-height:7px;color:#adadad;transform:scaleX(1.0261);transform-origin:0 0;'>[Document Name]</div>
<div class="t" style='left:1204.25px;top:702px;font:400 6.5px "Liberation Sans", sans-serif;line-height:7px;color:#adadad;transform:scaleX(1.0305);transform-origin:0 0;'>[Version Number]</div>
<div class="r" style="left:953px;top:711px;width:314px;height:1px;background:#b4b4b4;"></div>
<div class="t" style='left:953.00px;top:717px;font:400 11px "Liberation Sans", sans-serif;line-height:12px;color:#3d6598;transform:scaleX(0.8501);transform-origin:0 0;'>4.4</div>
<div class="t" style='left:991.20px;top:717px;font:400 11px "Liberation Sans", sans-serif;line-height:12px;color:#3d6598;transform:scaleX(1.0138);transform-origin:0 0;'>Systems Using the Database</div>
<div class="r" style="left:0px;top:0px;width:1400px;height:125px;background:#ffffff;"></div>
<div class="r" style="left:0px;top:124px;width:1400px;height:1px;background:#d4d4d4;"></div>
<div class="t" style='left:542.60px;top:5px;font:400 10.6px "Liberation Sans", sans-serif;line-height:12px;color:#444;transform:scaleX(0.9696);transform-origin:0 0;'>Database Design Template - Blue Theme - Coverpage Image - Word</div>
<svg class="r" style="left:8px;top:2px" width="16" height="15" viewBox="0 0 16 15"><path d="M7 1.5H14.5V13.5H7Z" fill="#fff" stroke="#2b579a" stroke-width="1"/><path d="M9.5 4.5H13M9.5 6.5H13M9.5 8.5H13M9.5 10.5H13" stroke="#2b579a" stroke-width="0.9"/><path d="M0.5 1.8L9.5 0.3V14.7L0.5 13.2Z" fill="#2b579a"/><text x="4.9" y="10.6" font-family="Liberation Sans, sans-serif" font-size="7" font-weight="700" fill="#fff" text-anchor="middle">W</text></svg>
<svg class="r" style="left:35px;top:3px" width="13" height="13" viewBox="0 0 13 13"><path d="M0.4 0.3H12.2V12.6H0.4Z" fill="#8145b4"/><path d="M2.6 1.2H10V6H2.6Z" fill="#fff"/><path d="M3 8.4H9.6V12.6H3Z" fill="#fff"/><path d="M4 9.2H6.2V12.6H4Z" fill="#8145b4"/></svg>
<svg class="r" style="left:60px;top:3px" width="14" height="12" viewBox="0 0 14 12"><path d="M2 4.3H8.2A3.5 3.5 0 0 1 8.2 11.2H6.3" fill="none" stroke="#3b78c6" stroke-width="1.6"/><path d="M5 0.8L1.2 4.3L5 7.8" fill="none" stroke="#3b78c6" stroke-width="1.7"/></svg>
<svg class="r" style="left:77.8px;top:8px" width="5" height="2.6" viewBox="0 0 5 2.6"><path d="M0 0H5L2.5 2.6Z" fill="#666"/></svg>
<svg class="r" style="left:95px;top:3px" width="13" height="13" viewBox="0 0 13 13"><path d="M4.6 1.7A4.8 4.8 0 1 0 10.3 3.6" fill="none" stroke="#3b78c6" stroke-width="1.6"/><path d="M7.2 1.1H11.5V4.6" fill="none" stroke="#3b78c6" stroke-width="1.4"/></svg>
<div class="t" style='left:121.00px;top:2px;font:700 5.2px "Liberation Sans", sans-serif;line-height:6px;color:#444;transform:scaleX(0.9788);transform-origin:0 0;'>ABC</div>
<svg class="r" style="left:121px;top:8px" width="12" height="9" viewBox="0 0 12 9"><path d="M1.2 4.4L4.5 7.5L11.3 1" fill="none" stroke="#3b78c6" stroke-width="2"/></svg>
<svg class="r" style="left:144px;top:2px" width="16" height="15" viewBox="0 0 16 15"><path d="M7.5 1.5H14.5V7.5H7.5Z" fill="#e9e9e9" stroke="#8a8a8a" stroke-width="0.9"/><path d="M9 3.5H13" stroke="#8a8a8a" stroke-width="0.8"/><path d="M1.5 7.5H5.5L7.5 9.5V14.3H1.5Z" fill="#fff" stroke="#666" stroke-width="0.9"/><path d="M2 5.5C2.5 3 5 2.4 6.6 3.4" fill="none" stroke="#2e6fc0" stroke-width="1"/></svg>
<div class="r" style="left:170.5px;top:8px;width:5px;height:1px;background:#666;"></div>
<svg class="r" style="left:170.5px;top:10px" width="5" height="2.6" viewBox="0 0 5 2.6"><path d="M0 0H5L2.5 2.6Z" fill="#666"/></svg>
<div class="t" style='left:1281.50px;top:4px;font:700 10.5px "Liberation Sans", sans-serif;line-height:12px;color:#555;'>?</div>
<svg class="r" style="left:1304px;top:5px" width="13" height="9" viewBox="0 0 13 9"><path d="M0.5 0.5H11.5V8.5H0.5Z" fill="#fff" stroke="#666" stroke-width="0.9"/><path d="M0.5 2.3H11.5" stroke="#666" stroke-width="0.8"/><path d="M6 7.5V3.8M4.2 5.4L6 3.6L7.8 5.4" stroke="#666" stroke-width="0.9" fill="none"/></svg>
<div class="r" style="left:1331.7px;top:10.6px;width:8px;height:1.7px;background:#555;"></div>
<svg class="r" style="left:1356px;top:5px" width="11" height="9" viewBox="0 0 11 9"><path d="M3 0.7H9.5V5.5H7.5" fill="none" stroke="#555" stroke-width="1"/><path d="M3 2H9.5" stroke="#555" stroke-width="1.3"/><path d="M0.8 3H7.3V8.2H0.8Z" fill="#fff" stroke="#555" stroke-width="1"/><path d="M0.8 3.9H7.3" stroke="#555" stroke-width="1.3"/></svg>
<svg class="r" style="left:1382px;top:5px" width="10" height="9" viewBox="0 0 10 9"><path d="M1 1L8.5 8M8.5 1L1 8" stroke="#444" stroke-width="1.6"/></svg>
<div class="r" style="left:0px;top:43px;width:1400px;height:1px;background:#d4d4d4;"></div>
<div class="r" style="left:0px;top:22px;width:52px;height:22px;background:#2b579a;"></div>
<div class="t" style='left:16.70px;top:27px;font:400 10.6px "Liberation Sans", sans-serif;line-height:12px;color:#fff;transform:scaleX(0.8180);transform-origin:0 0;'>FILE</div>
<div class="r" style="left:55px;top:22px;width:55px;height:22.5px;background:#fff;border:1px solid #d4d4d4;border-bottom:none"></div>
<div class="t" style='left:66.80px;top:27px;font:400 10.6px "Liberation Sans", sans-serif;line-height:12px;color:#2b579a;transform:scaleX(0.9408);transform-origin:0 0;'>HOME</div>
<div class="t" style='left:122.25px;top:27px;font:400 10.6px "Liberation Sans", sans-serif;line-height:12px;color:#3a3a3a;transform:scaleX(0.8278);transform-origin:0 0;'>INSERT</div>
<div class="t" style='left:180.50px;top:27px;font:400 10.6px "Liberation Sans", sans-serif;line-height:12px;color:#3a3a3a;transform:scaleX(0.8494);transform-origin:0 0;'>DESIGN</div>
<div class="t" style='left:240.50px;top:27px;font:400 10.6px "Liberation Sans", sans-serif;line-height:12px;color:#3a3a3a;transform:scaleX(0.8881);transform-origin:0 0;'>PAGE LAYOUT</div>
<div class="t" style='left:331.75px;top:27px;font:400 10.6px "Liberation Sans", sans-serif;line-height:12px;color:#3a3a3a;transform:scaleX(0.8045);transform-origin:0 0;'>REFERENCES</div>
<div class="t" style='left:415.75px;top:27px;font:400 10.6px "Liberation Sans", sans-serif;line-height:12px;color:#3a3a3a;transform:scaleX(0.9234);transform-origin:0 0;'>MAILINGS</div>
<div class="t" style='left:488.75px;top:27px;font:400 10.6px "Liberation Sans", sans-serif;line-height:12px;color:#3a3a3a;transform:scaleX(0.8196);transform-origin:0 0;'>REVIEW</div>
<div class="t" style='left:548.75px;top:27px;font:400 10.6px "Liberation Sans", sans-serif;line-height:12px;color:#3a3a3a;transform:scaleX(0.8588);transform-origin:0 0;'>VIEW</div>
<div class="t" style='left:597.50px;top:27px;font:400 10.6px "Liberation Sans", sans-serif;line-height:12px;color:#3a3a3a;transform:scaleX(0.8377);transform-origin:0 0;'>DEVELOPER</div>
<div class="t" style='left:1303.80px;top:26px;font:400 10.9px "Liberation Sans", sans-serif;line-height:12px;color:#3a3a3a;transform:scaleX(0.9202);transform-origin:0 0;'>Ivan Walsh</div>
<svg class="r" style="left:1359.5px;top:31px" width="4.6" height="2.5" viewBox="0 0 4.6 2.5"><path d="M0 0H4.6L2.3 2.5Z" fill="#666"/></svg>
<div class="r" style="left:1371.5px;top:23.5px;width:19px;height:18.2px;background:#1e4b7c;border-radius:2px"></div>
<div class="t" style='left:1376.60px;top:27px;font:400 12.6px "Liberation Sans", sans-serif;line-height:14px;color:#fff;'>K</div>
<svg class="r" style="left:10px;top:50px" width="27" height="27" viewBox="0 0 27 27"><path d="M1.5 3.5H21.5V24.5H1.5Z" fill="#eac06f"/><path d="M1.5 3.5H21.5V24.5H1.5Z" fill="none" stroke="#e2b55f" stroke-width="0.8"/><path d="M6 6.8V3.6H9V2.4A2.6 2.1 0 0 1 14.2 2.4V3.6H17.2V6.8Z" fill="#555"/><circle cx="11.6" cy="2.7" r="1" fill="#fff"/><path d="M13.9 10.3H21.3L25.5 14.5V26H13.9Z" fill="#fff" stroke="#555" stroke-width="1"/><path d="M21.3 10.3V14.5H25.5" fill="none" stroke="#555" stroke-width="0.9"/></svg>
<div class="t" style='left:10.00px;top:80px;font:400 10.6px "Liberation Sans", sans-serif;line-height:12px;color:#3a3a3a;transform:scaleX(0.8859);transform-origin:0 0;'>Paste</div>
<svg class="r" style="left:19.3px;top:99px" width="4.6" height="2.5" viewBox="0 0 4.6 2.5"><path d="M0 0H4.6L2.3 2.5Z" fill="#666"/></svg>
<svg class="r" style="left:43px;top:49px" width="14" height="13" viewBox="0 0 14 13"><path d="M3 0.8L9.6 8.6M11 0.8L4.4 8.6" stroke="#b0b0b0" stroke-width="1.1" fill="none"/><circle cx="3" cy="10.2" r="1.9" fill="none" stroke="#b0b0b0" stroke-width="1"/><circle cx="11" cy="10.2" r="1.9" fill="none" stroke="#b0b0b0" stroke-width="1"/></svg>
<div class="t" style='left:59.80px;top:50px;font:400 10.6px "Liberation Sans", sans-serif;line-height:12px;color:#a6a6a6;transform:scaleX(0.9706);transform-origin:0 0;'>Cut</div>
<svg class="r" style="left:43px;top:70px" width="14" height="13" viewBox="0 0 14 13"><path d="M0.6 0.6H5.5L7.5 2.6V8.5H0.6Z" fill="#fff" stroke="#b4b4b4" stroke-width="0.9"/><path d="M2 3H5M2 5H6" stroke="#c4c4c4" stroke-width="0.8"/><path d="M5.6 3.6H10.5L12.8 5.8V12.4H5.6Z" fill="#fff" stroke="#b4b4b4" stroke-width="0.9"/><path d="M7.2 7H11M7.2 8.8H11M7.2 10.6H11" stroke="#c4c4c4" stroke-width="0.8"/></svg>
<div class="t" style='left:59.80px;top:71px;font:400 10.6px "Liberation Sans", sans-serif;line-height:12px;color:#a6a6a6;transform:scaleX(0.9583);transform-origin:0 0;'>Copy</div>
<svg class="r" style="left:43px;top:90px" width="14" height="12" viewBox="0 0 14 12"><path d="M0.6 7.2L6.2 4.2L9 8.4L4.8 11.6Z" fill="#eac06f"/><path d="M6.3 3.2L9.6 1.2L12 5.6L9 7.6Z" fill="#555"/><path d="M10 1L12.2 0.2L13.4 2L11.6 3.4Z" fill="#555"/></svg>
<div class="t" style='left:59.80px;top:90px;font:400 10.6px "Liberation Sans", sans-serif;line-height:12px;color:#3a3a3a;transform:scaleX(0.9677);transform-origin:0 0;'>Format Painter</div>
<div class="t" style='left:39.80px;top:112px;font:400 10.3px "Liberation Sans", sans-serif;line-height:11px;color:#666;transform:scaleX(0.9915);transform-origin:0 0;'>Clipboard</div>
<svg class="r" style="left:127.3px;top:114.5px" width="7" height="7" viewBox="0 0 7 7"><path d="M0.5 5V0.5H5" fill="none" stroke="#777" stroke-width="1"/><path d="M2.5 2.5L6 6M6 3V6H3" fill="none" stroke="#777" stroke-width="1"/></svg>
<div class="r" style="left:138px;top:48px;width:1px;height:73px;background:#dadada;"></div>
<div class="r" style="left:142px;top:53px;width:82px;height:21px;background:#fff;border:1px solid #c6c6c6;"></div>
<div class="r" style="left:223px;top:53px;width:39px;height:21px;background:#fff;border:1px solid #c6c6c6;"></div>
<div class="t" style='left:144.60px;top:57px;font:400 10.8px "Liberation Sans", sans-serif;line-height:12px;color:#222;transform:scaleX(0.9445);transform-origin:0 0;'>Arial</div>
<svg class="r" style="left:215px;top:62.5px" width="4.8" height="2.6" viewBox="0 0 4.8 2.6"><path d="M0 0H4.8L2.4 2.6Z" fill="#666"/></svg>
<div class="t" style='left:226.90px;top:57px;font:400 10.8px "Liberation Sans", sans-serif;line-height:12px;color:#222;transform:scaleX(0.8030);transform-origin:0 0;'>11</div>
<svg class="r" style="left:252.6px;top:62.5px" width="4.8" height="2.6" viewBox="0 0 4.8 2.6"><path d="M0 0H4.8L2.4 2.6Z" fill="#666"/></svg>
<div class="t" style='left:267.20px;top:57px;font:400 11.8px "Liberation Sans", sans-serif;line-height:14px;color:#555;'>A</div>
<svg class="r" style="left:274.3px;top:56.8px" width="4" height="3" viewBox="0 0 4 3"><path d="M0 3H4L2 0Z" fill="#2e6fc0"/></svg>
<div class="t" style='left:287.20px;top:59px;font:400 10px "Liberation Sans", sans-serif;line-height:11px;color:#555;'>A</div>
<svg class="r" style="left:293px;top:57px" width="4.5" height="3" viewBox="0 0 4.5 3"><path d="M0 0H4.5L2.25 3Z" fill="#2e6fc0"/></svg>
<div class="r" style="left:304px;top:53.6px;width:1px;height:17.999999999999993px;background:#dadada;"></div>
<div class="t" style='left:310.70px;top:56px;font:400 10.8px "Liberation Sans", sans-serif;line-height:12px;color:#555;'>Aa</div>
<svg class="r" style="left:328.2px;top:62.5px" width="4.6" height="2.5" viewBox="0 0 4.6 2.5"><path d="M0 0H4.6L2.3 2.5Z" fill="#666"/></svg>
<div class="r" style="left:340.5px;top:53.6px;width:1px;height:17.999999999999993px;background:#dadada;"></div>
<div class="t" style='left:348.60px;top:55px;font:400 11.4px "Liberation Sans", sans-serif;line-height:12px;color:#555;'>A</div>
<svg class="r" style="left:350px;top:58px" width="12" height="12" viewBox="0 0 12 12"><path d="M6.2 0.8L11.2 4.6L6 10.8L1 7Z" fill="#f08a9b"/><path d="M3.4 4.2L8.4 8" stroke="#fff" stroke-width="1.4"/><path d="M2 8L5 10.4" stroke="#e05a70" stroke-width="1"/></svg>
<div class="t" style='left:147.50px;top:85px;font:700 10.2px "Liberation Sans", sans-serif;line-height:11px;color:#444;'>B</div>
<div class="t" style='left:167.30px;top:85px;font:italic 700 10.6px "Liberation Serif", serif;line-height:11px;color:#444;'>I</div>
<div class="t" style='left:185.80px;top:85px;font:400 10.2px "Liberation Sans", sans-serif;line-height:11px;color:#444;'>U</div>
<div class="r" style="left:185.6px;top:94.6px;width:7.2px;height:1px;background:#444;"></div>
<svg class="r" style="left:202.2px;top:89.2px" width="4.4" height="2.4" viewBox="0 0 4.4 2.4"><path d="M0 0H4.4L2.2 2.4Z" fill="#666"/></svg>
<div class="t" style='left:212.60px;top:85px;font:400 9.8px "Liberation Sans", sans-serif;line-height:11px;color:#555;transform:scaleX(0.9053);transform-origin:0 0;'>abc</div>
<div class="r" style="left:212px;top:90.4px;width:15.4px;height:0.9px;background:#555;"></div>
<div class="t" style='left:234.00px;top:84px;font:700 11px "Liberation Sans", sans-serif;line-height:12px;color:#444;'>x</div>
<div class="t" style='left:241.60px;top:92px;font:700 4.6px "Liberation Sans", sans-serif;line-height:5px;color:#2e6fc0;'>2</div>
<div class="t" style='left:253.30px;top:84px;font:700 11px "Liberation Sans", sans-serif;line-height:12px;color:#444;'>x</div>
<div class="t" style='left:260.80px;top:85px;font:700 4.6px "Liberation Sans", sans-serif;line-height:5px;color:#2e6fc0;'>2</div>
<div class="r" style="left:271px;top:80.6px;width:1px;height:18.700000000000003px;background:#dadada;"></div>
<div class="t" style='left:279.2px;top:82.3px;font:700 14.4px "Liberation Sans",sans-serif;line-height:14.4px;color:#fff;-webkit-text-stroke:0.75px #4a86d4;text-shadow:0 0 1.5px #b5d2f2'>A</div>
<svg class="r" style="left:295.7px;top:89.2px" width="4.4" height="2.4" viewBox="0 0 4.4 2.4"><path d="M0 0H4.4L2.2 2.4Z" fill="#666"/></svg>
<div class="t" style='left:306.80px;top:84px;font:700 7.6px "Liberation Sans", sans-serif;line-height:9px;color:#555;'>ab</div>
<svg class="r" style="left:311px;top:84px" width="10" height="10" viewBox="0 0 10 10"><path d="M9 0.6L2.6 8.8" stroke="#666" stroke-width="1.9"/><path d="M2.8 7.2L1 9.6L3.6 9Z" fill="#2e6fc0"/></svg>
<div class="r" style="left:307.2px;top:93.7px;width:14px;height:3px;background:#ffef00;"></div>
<svg class="r" style="left:326.5px;top:89.2px" width="4.4" height="2.4" viewBox="0 0 4.4 2.4"><path d="M0 0H4.4L2.2 2.4Z" fill="#666"/></svg>
<div class="t" style='left:339.20px;top:83px;font:400 11px "Liberation Sans", sans-serif;line-height:12px;color:#4a4a4a;transform:scaleX(1.2);transform-origin:0 0;'>A</div>
<div class="r" style="left:336.8px;top:93.7px;width:14.2px;height:3px;background:#ee1111;"></div>
<svg class="r" style="left:356px;top:89.2px" width="4.4" height="2.4" viewBox="0 0 4.4 2.4"><path d="M0 0H4.4L2.2 2.4Z" fill="#666"/></svg>
<div class="t" style='left:235.90px;top:112px;font:400 10.3px "Liberation Sans", sans-serif;line-height:11px;color:#666;transform:scaleX(0.9755);transform-origin:0 0;'>Font</div>
<svg class="r" style="left:357.8px;top:114.5px" width="7" height="7" viewBox="0 0 7 7"><path d="M0.5 5V0.5H5" fill="none" stroke="#777" stroke-width="1"/><path d="M2.5 2.5L6 6M6 3V6H3" fill="none" stroke="#777" stroke-width="1"/></svg>
<div class="r" style="left:368px;top:48px;width:1px;height:73px;background:#dadada;"></div>
<svg class="r" style="left:375px;top:56px" width="13" height="13" viewBox="0 0 13 13"><circle cx="1.5" cy="1.7" r="1.2" fill="#2e6fc0"/><circle cx="1.5" cy="6.5" r="1.2" fill="#2e6fc0"/><circle cx="1.5" cy="11.3" r="1.2" fill="#2e6fc0"/><path d="M4.5 1.7H12M4.5 6.5H12M4.5 11.3H12" stroke="#777" stroke-width="1"/></svg>
<svg class="r" style="left:393.7px;top:62.5px" width="4.6" height="2.5" viewBox="0 0 4.6 2.5"><path d="M0 0H4.6L2.3 2.5Z" fill="#666"/></svg>
<svg class="r" style="left:404.5px;top:55.5px" width="14" height="14" viewBox="0 0 14 14"><path d="M5.5 2.2H13M5.5 7H13M5.5 11.8H13" stroke="#777" stroke-width="1"/><text x="0" y="4.2" font-family="Liberation Sans, sans-serif" font-size="5" font-weight="700" fill="#2e6fc0">1</text><text x="0" y="9" font-family="Liberation Sans, sans-serif" font-size="5" font-weight="700" fill="#2e6fc0">2</text><text x="0" y="13.8" font-family="Liberation Sans, sans-serif" font-size="5" font-weight="700" fill="#2e6fc0">3</text></svg>
<svg class="r" style="left:423.5px;top:62.5px" width="4.6" height="2.5" viewBox="0 0 4.6 2.5"><path d="M0 0H4.6L2.3 2.5Z" fill="#666"/></svg>
<svg class="r" style="left:433.5px;top:55.5px" width="15" height="14" viewBox="0 0 15 14"><path d="M4.5 2.2H14M7.5 7H14M10.5 11.8H13" stroke="#777" stroke-width="1"/><text x="0" y="4.2" font-family="Liberation Sans, sans-serif" font-size="4.6" font-weight="700" fill="#2e6fc0">1</text><text x="3" y="9" font-family="Liberation Sans, sans-serif" font-size="4.6" font-weight="700" fill="#2e6fc0">a</text><text x="7" y="13.8" font-family="Liberation Sans, sans-serif" font-size="4.6" font-weight="700" fill="#2e6fc0">i</text></svg>
<svg class="r" style="left:451px;top:62.5px" width="4.6" height="2.5" viewBox="0 0 4.6 2.5"><path d="M0 0H4.6L2.3 2.5Z" fill="#666"/></svg>
<div class="r" style="left:464.3px;top:53.6px;width:1px;height:17.999999999999993px;background:#dadada;"></div>
<svg class="r" style="left:470px;top:57px" width="16" height="11" viewBox="0 0 16 11"><path d="M7 1H15M9 4H15M9 7H15M7 10H15" stroke="#777" stroke-width="1"/><path d="M0.3 5.5L3.8 2.3V4.6H7.6V6.4H3.8V8.7Z" fill="#2e6fc0"/></svg>
<svg class="r" style="left:489.5px;top:57px" width="16" height="11" viewBox="0 0 16 11"><path d="M7 1H15M9 4H15M9 7H15M7 10H15" stroke="#777" stroke-width="1"/><path d="M7.8 5.5L4.3 2.3V4.6H0.5V6.4H4.3V8.7Z" fill="#2e6fc0"/></svg>
<div class="r" style="left:510.5px;top:53.6px;width:1px;height:17.999999999999993px;background:#dadada;"></div>
<div class="t" style='left:518.80px;top:55px;font:700 7.4px "Liberation Sans", sans-serif;line-height:9px;color:#2e6fc0;'>A</div>
<div class="t" style='left:519.00px;top:62px;font:700 7.4px "Liberation Sans", sans-serif;line-height:9px;color:#7a3db0;'>Z</div>
<svg class="r" style="left:526px;top:56px" width="6" height="13" viewBox="0 0 6 13"><path d="M3 0V12M0.6 9.4L3 12.2L5.4 9.4" stroke="#666" stroke-width="1.1" fill="none"/></svg>
<div class="r" style="left:537.3px;top:53.6px;width:1px;height:17.999999999999993px;background:#dadada;"></div>
<div class="t" style='left:546.30px;top:56px;font:700 13px "Liberation Sans", sans-serif;line-height:15px;color:#555;'>¶</div>
<div class="r" style="left:372px;top:80.4px;width:19px;height:20px;background:#c3d5f0;"></div>
<div class="r" style="left:375.3px;top:85.4px;width:12.2px;height:1px;background:#6a6a6a;"></div>
<div class="r" style="left:375.3px;top:88.4px;width:8.7px;height:1px;background:#6a6a6a;"></div>
<div class="r" style="left:375.3px;top:91.4px;width:12.2px;height:1px;background:#6a6a6a;"></div>
<div class="r" style="left:375.3px;top:94.4px;width:8.7px;height:1px;background:#6a6a6a;"></div>
<div class="r" style="left:394.6px;top:85.4px;width:12.2px;height:1px;background:#777;"></div>
<div class="r" style="left:396.6px;top:88.4px;width:8.2px;height:1px;background:#777;"></div>
<div class="r" style="left:394.6px;top:91.4px;width:12.2px;height:1px;background:#777;"></div>
<div class="r" style="left:396.6px;top:94.4px;width:8.2px;height:1px;background:#777;"></div>
<div class="r" style="left:413.9px;top:85.4px;width:12.2px;height:1px;background:#777;"></div>
<div class="r" style="left:417.4px;top:88.4px;width:8.7px;height:1px;background:#777;"></div>
<div class="r" style="left:413.9px;top:91.4px;width:12.2px;height:1px;background:#777;"></div>
<div class="r" style="left:417.4px;top:94.4px;width:8.7px;height:1px;background:#777;"></div>
<div class="r" style="left:433.2px;top:85.4px;width:12.2px;height:1px;background:#777;"></div>
<div class="r" style="left:433.2px;top:88.4px;width:12.2px;height:1px;background:#777;"></div>
<div class="r" style="left:433.2px;top:91.4px;width:12.2px;height:1px;background:#777;"></div>
<div class="r" style="left:433.2px;top:94.4px;width:12.2px;height:1px;background:#777;"></div>
<div class="r" style="left:452.5px;top:80.6px;width:1px;height:18.700000000000003px;background:#dadada;"></div>
<svg class="r" style="left:459.5px;top:83px" width="14" height="15" viewBox="0 0 14 15"><path d="M6 3.4H13M6 6.4H13M6 9.4H13M6 12.4H13" stroke="#777" stroke-width="1"/><path d="M2.6 1V14M0.4 3.4L2.6 0.8L4.8 3.4M0.4 11.6L2.6 14.2L4.8 11.6" stroke="#2e6fc0" stroke-width="1.1" fill="none"/></svg>
<svg class="r" style="left:476.9px;top:89.2px" width="4.4" height="2.4" viewBox="0 0 4.4 2.4"><path d="M0 0H4.4L2.2 2.4Z" fill="#666"/></svg>
<div class="r" style="left:489.4px;top:80.6px;width:1px;height:18.700000000000003px;background:#dadada;"></div>
<svg class="r" style="left:496px;top:83px" width="15" height="14" viewBox="0 0 15 14"><path d="M3.5 6.5L8 1.6L12.4 6L7.6 10.6Z" fill="#fff" stroke="#666" stroke-width="1"/><path d="M6.4 3.4C5.4 1.4 6.6 0.4 7.6 0.8" stroke="#666" stroke-width="0.9" fill="none"/><path d="M12.2 5.2C13.6 6.8 14 8.4 13 9.2C12 9.4 11.8 7.6 12.2 5.2Z" fill="#2e6fc0"/><path d="M0.5 11.2H14.3V13.5H0.5Z" fill="#fff" stroke="#999" stroke-width="0.8"/></svg>
<svg class="r" style="left:515px;top:89.2px" width="4.4" height="2.4" viewBox="0 0 4.4 2.4"><path d="M0 0H4.4L2.2 2.4Z" fill="#666"/></svg>
<svg class="r" style="left:526.5px;top:84px" width="12" height="12" viewBox="0 0 12 12"><path d="M0.5 0.5H11.5V11.5H0.5ZM6 0.5V11.5M0.5 6H11.5" fill="none" stroke="#999" stroke-width="0.9" stroke-dasharray="1.2 1"/></svg>
<svg class="r" style="left:545px;top:89.2px" width="4.4" height="2.4" viewBox="0 0 4.4 2.4"><path d="M0 0H4.4L2.2 2.4Z" fill="#666"/></svg>
<div class="t" style='left:436.40px;top:112px;font:400 10.3px "Liberation Sans", sans-serif;line-height:11px;color:#666;transform:scaleX(0.9587);transform-origin:0 0;'>Paragraph</div>
<svg class="r" style="left:554.5px;top:114.5px" width="7" height="7" viewBox="0 0 7 7"><path d="M0.5 5V0.5H5" fill="none" stroke="#777" stroke-width="1"/><path d="M2.5 2.5L6 6M6 3V6H3" fill="none" stroke="#777" stroke-width="1"/></svg>
<div class="r" style="left:564.6px;top:48px;width:1px;height:73px;background:#dadada;"></div>
<div class="r" style="left:570px;top:49px;width:708px;height:52.5px;background:#fff;border:1px solid #c6c6c6;"></div>
<div class="r" style="left:1264.5px;top:49px;width:1px;height:52.5px;background:#c6c6c6;"></div>
<div class="r" style="left:1264.5px;top:67.5px;width:13px;height:1px;background:#c6c6c6;"></div>
<div class="r" style="left:1264.5px;top:84.3px;width:13px;height:1px;background:#c6c6c6;"></div>
<svg class="r" style="left:1268.7px;top:56.5px" width="5" height="3" viewBox="0 0 5 3"><path d="M0 3H5L2.5 0Z" fill="#c8c8c8"/></svg>
<svg class="r" style="left:1268.7px;top:74.8px" width="5" height="2.8" viewBox="0 0 5 2.8"><path d="M0 0H5L2.5 2.8Z" fill="#666"/></svg>
<div class="r" style="left:1268.7px;top:89.6px;width:5px;height:1px;background:#666;"></div>
<svg class="r" style="left:1268.7px;top:91.8px" width="5" height="2.8" viewBox="0 0 5 2.8"><path d="M0 0H5L2.5 2.8Z" fill="#666"/></svg>
<div class="t" style='left:576.20px;top:62px;font:400 12.4px "Liberation Serif", serif;line-height:14px;color:#222;transform:scaleX(1.0898);transform-origin:0 0;'>AaBbCcI</div>
<div class="t" style='left:586.40px;top:85px;font:400 10.4px "Liberation Sans", sans-serif;line-height:11px;color:#3a3a3a;transform:scaleX(0.9704);transform-origin:0 0;'>¶ Body</div>
<div class="t" style='left:639.40px;top:61px;font:italic 400 12.4px "Liberation Sans", sans-serif;line-height:14px;color:#222;transform:scaleX(1.0704);transform-origin:0 0;'>AaBbCcl</div>
<div class="t" style='left:643.00px;top:85px;font:400 10.4px "Liberation Sans", sans-serif;line-height:11px;color:#3a3a3a;transform:scaleX(0.9778);transform-origin:0 0;'>¶ Caption</div>
<div class="r" style="left:697px;top:46px;width:56.39999999999998px;height:40px;overflow:hidden">
<div class="t" style='left:7.20px;top:6px;font:400 24.4px "Liberation Sans", sans-serif;line-height:27px;color:#2e63a8;transform:scaleX(0.62);transform-origin:0 0;'>1</div>
</div>
<div class="r" style="left:697px;top:46px;width:56.39999999999998px;height:40px;overflow:hidden">
<div class="t" style='left:33.20px;top:6px;font:400 24.4px "Liberation Sans", sans-serif;line-height:27px;color:#2e63a8;transform:scaleX(1.0469);transform-origin:0 0;'>Ac</div>
</div>
<div class="t" style='left:704.70px;top:85px;font:400 10.4px "Liberation Sans", sans-serif;line-height:11px;color:#3a3a3a;transform:scaleX(0.9626);transform-origin:0 0;'>Heading 1</div>
<div class="r" style="left:760px;top:46px;width:57px;height:40px;overflow:hidden">
<div class="t" style='left:7.00px;top:13px;font:400 16.6px "Liberation Sans", sans-serif;line-height:19px;color:#2e63a8;transform:scaleX(0.8367);transform-origin:0 0;'>1.1</div>
</div>
<div class="r" style="left:760px;top:46px;width:57px;height:40px;overflow:hidden">
<div class="t" style='left:41.20px;top:13px;font:400 16.6px "Liberation Sans", sans-serif;line-height:19px;color:#2e63a8;transform:scaleX(1.0741);transform-origin:0 0;'>Ac</div>
</div>
<div class="t" style='left:767.70px;top:85px;font:400 10.4px "Liberation Sans", sans-serif;line-height:11px;color:#3a3a3a;transform:scaleX(0.9879);transform-origin:0 0;'>Heading 2</div>
<div class="r" style="left:823px;top:46px;width:56.799999999999955px;height:40px;overflow:hidden">
<div class="t" style='left:6.70px;top:13px;font:400 16.6px "Liberation Sans", sans-serif;line-height:19px;color:#2e63a8;transform:scaleX(0.8887);transform-origin:0 0;'>1.1.1</div>
</div>
<div class="r" style="left:823px;top:46px;width:56.799999999999955px;height:40px;overflow:hidden">
<div class="t" style='left:51.60px;top:13px;font:400 16.6px "Liberation Sans", sans-serif;line-height:19px;color:#2e63a8;'>A</div>
</div>
<div class="t" style='left:826.50px;top:85px;font:400 10.4px "Liberation Sans", sans-serif;line-height:11px;color:#3a3a3a;transform:scaleX(0.9742);transform-origin:0 0;'>¶ Heading 3</div>
<div class="r" style="left:886px;top:46px;width:57.200000000000045px;height:40px;overflow:hidden">
<div class="t" style='left:6.70px;top:14px;font:400 15px "Liberation Sans", sans-serif;line-height:17px;color:#5d86bd;transform:scaleX(0.8262);transform-origin:0 0;'>1.1.1.1</div>
</div>
<div class="r" style="left:886px;top:46px;width:57.200000000000045px;height:40px;overflow:hidden">
<div class="t" style='left:53.80px;top:14px;font:400 15px "Liberation Sans", sans-serif;line-height:17px;color:#5d86bd;'>A</div>
</div>
<div class="t" style='left:889.50px;top:85px;font:400 10.4px "Liberation Sans", sans-serif;line-height:11px;color:#3a3a3a;transform:scaleX(0.9724);transform-origin:0 0;'>¶ Heading 4</div>
<div class="t" style='left:954.60px;top:62px;font:400 11.3px "Liberation Sans", sans-serif;line-height:12px;color:#3b3bb3;transform:scaleX(0.9802);transform-origin:0 0;'>1.1.1.1.1</div>
<div class="t" style='left:952.00px;top:85px;font:400 10.4px "Liberation Sans", sans-serif;line-height:11px;color:#3a3a3a;transform:scaleX(0.9850);transform-origin:0 0;'>¶ Heading 5</div>
<div class="t" style='left:1018.00px;top:63px;font:400 10px "Liberation Sans", sans-serif;line-height:11px;color:#3b3bb3;transform:scaleX(1.0114);transform-origin:0 0;'>1.1.1.1.1.1</div>
<div class="t" style='left:1015.00px;top:85px;font:400 10.4px "Liberation Sans", sans-serif;line-height:11px;color:#3a3a3a;transform:scaleX(0.9850);transform-origin:0 0;'>¶ Heading 6</div>
<div class="t" style='left:1081.00px;top:61px;font:400 14px "Liberation Sans", sans-serif;line-height:16px;color:#1d3f92;transform:scaleX(0.9231);transform-origin:0 0;'>1.1.1.1.1</div>
<div class="t" style='left:1078.00px;top:85px;font:400 10.4px "Liberation Sans", sans-serif;line-height:11px;color:#3a3a3a;transform:scaleX(0.9778);transform-origin:0 0;'>¶ Heading 7</div>
<div class="t" style='left:1144.80px;top:61px;font:italic 400 14px "Liberation Sans", sans-serif;line-height:16px;color:#1d3f92;transform:scaleX(0.9213);transform-origin:0 0;'>1.1.1.1.1</div>
<div class="t" style='left:1141.00px;top:85px;font:400 10.4px "Liberation Sans", sans-serif;line-height:11px;color:#3a3a3a;transform:scaleX(0.9850);transform-origin:0 0;'>¶ Heading 8</div>
<div class="t" style='left:1207.20px;top:61px;font:400 12.6px "Liberation Sans", sans-serif;line-height:14px;color:#1d3f92;transform:scaleX(0.9540);transform-origin:0 0;'>1.1.1.1.1.</div>
<div class="t" style='left:1204.00px;top:85px;font:400 10.4px "Liberation Sans", sans-serif;line-height:11px;color:#3a3a3a;transform:scaleX(0.9778);transform-origin:0 0;'>¶ Heading 9</div>
<div class="t" style='left:904.90px;top:112px;font:400 10.3px "Liberation Sans", sans-serif;line-height:11px;color:#666;transform:scaleX(0.8845);transform-origin:0 0;'>Styles</div>
<svg class="r" style="left:1273.8px;top:114.5px" width="7" height="7" viewBox="0 0 7 7"><path d="M0.5 5V0.5H5" fill="none" stroke="#777" stroke-width="1"/><path d="M2.5 2.5L6 6M6 3V6H3" fill="none" stroke="#777" stroke-width="1"/></svg>
<div class="r" style="left:1284px;top:48px;width:1px;height:73px;background:#dadada;"></div>
<svg class="r" style="left:1290px;top:50px" width="14" height="11" viewBox="0 0 14 11"><path d="M2.6 0.6H5.4V3H2.6ZM8.6 0.6H11.4V3H8.6Z" fill="#555"/><path d="M0.6 10.4V5.2L2 2.6H6V10.4ZM13.4 10.4V5.2L12 2.6H8V10.4Z" fill="#555"/><path d="M5.6 4H8.4V7.4H5.6Z" fill="#555"/></svg>
<div class="t" style='left:1307.90px;top:50px;font:400 10.6px "Liberation Sans", sans-serif;line-height:12px;color:#3a3a3a;transform:scaleX(0.9268);transform-origin:0 0;'>Find</div>
<svg class="r" style="left:1336px;top:55.6px" width="4.6" height="2.5" viewBox="0 0 4.6 2.5"><path d="M0 0H4.6L2.3 2.5Z" fill="#666"/></svg>
<div class="t" style='left:1290.30px;top:70px;font:400 7.6px "Liberation Sans", sans-serif;line-height:9px;color:#555;'>ab</div>
<div class="t" style='left:1295.60px;top:75px;font:700 8px "Liberation Sans", sans-serif;line-height:9px;color:#444;'>ac</div>
<svg class="r" style="left:1290.3px;top:77.5px" width="5" height="4" viewBox="0 0 5 4"><path d="M0.4 0.6C0.8 2.6 2.4 3.2 4.4 3.2M4.4 3.2L2.6 1.6M4.4 3.2L2.4 3.9" stroke="#2e6fc0" stroke-width="0.9" fill="none"/></svg>
<div class="t" style='left:1307.90px;top:70px;font:400 10.6px "Liberation Sans", sans-serif;line-height:12px;color:#3a3a3a;transform:scaleX(0.9082);transform-origin:0 0;'>Replace</div>
<svg class="r" style="left:1294px;top:89.5px" width="9" height="13" viewBox="0 0 9 13"><path d="M0.6 0.8V10.2L3 8L4.8 12L6.2 11.4L4.5 7.5H7.6Z" fill="#fff" stroke="#555" stroke-width="0.9"/></svg>
<div class="t" style='left:1307.90px;top:90px;font:400 10.6px "Liberation Sans", sans-serif;line-height:12px;color:#3a3a3a;transform:scaleX(0.8932);transform-origin:0 0;'>Select</div>
<svg class="r" style="left:1337.3px;top:96.2px" width="4.4" height="2.4" viewBox="0 0 4.4 2.4"><path d="M0 0H4.4L2.2 2.4Z" fill="#666"/></svg>
<div class="t" style='left:1302.80px;top:112px;font:400 10.3px "Liberation Sans", sans-serif;line-height:11px;color:#666;transform:scaleX(0.9878);transform-origin:0 0;'>Editing</div>
<div class="r" style="left:1353px;top:48px;width:1px;height:73px;background:#dadada;"></div>
<svg class="r" style="left:1383.5px;top:115px" width="8" height="5" viewBox="0 0 8 5"><path d="M0.6 4.6L4 1L7.4 4.6" fill="none" stroke="#555" stroke-width="1.3"/></svg>
<div class="r" style="left:0px;top:734px;width:1400px;height:19px;background:#2b579a;"></div>
<div class="t" style='left:6.40px;top:738px;font:400 9.8px "Liberation Sans", sans-serif;line-height:11px;color:#f3f6fb;transform:scaleX(0.9206);transform-origin:0 0;'>PAGE 20 OF 36</div>
<div class="t" style='left:87.50px;top:738px;font:400 9.8px "Liberation Sans", sans-serif;line-height:11px;color:#f3f6fb;transform:scaleX(0.9586);transform-origin:0 0;'>3573 WORDS</div>
<svg class="r" style="left:164px;top:737px" width="14" height="13" viewBox="0 0 14 13"><path d="M0.7 0.8H6.3V9.7H0.7Z" fill="none" stroke="#dfe6f3" stroke-width="1"/><path d="M6.3 0.8H11.6V2.2M6.3 9.7H11.6M6.3 9.7V11.2" fill="none" stroke="#dfe6f3" stroke-width="1"/><path d="M8.3 3.5L12.7 8M12.7 3.5L8.3 8" stroke="#fff" stroke-width="1.5"/></svg>
<div class="t" style='left:192.00px;top:738px;font:400 9.8px "Liberation Sans", sans-serif;line-height:11px;color:#f3f6fb;transform:scaleX(0.8603);transform-origin:0 0;'>ENGLISH (UNITED STATES)</div>
<svg class="r" style="left:1154.5px;top:738px" width="13" height="11" viewBox="0 0 13 11"><path d="M0.5 1H5.6L6.5 1.8L7.4 1H12.5V9.6H7.4L6.5 10.4L5.6 9.6H0.5Z" fill="none" stroke="#e8eef8" stroke-width="0.9"/><path d="M6.5 1.8V10.2M2 3.2H5M2 5H5M2 6.8H5M8 3.2H11M8 5H11M8 6.8H11" stroke="#e8eef8" stroke-width="0.8"/></svg>
<div class="r" style="left:1178px;top:734px;width:32px;height:19px;background:#224a85;"></div>
<svg class="r" style="left:1188px;top:737px" width="13" height="12" viewBox="0 0 13 12"><path d="M0.5 0.5H12.5V11.5H0.5Z" fill="none" stroke="#fff" stroke-width="1"/><path d="M2 2.5H11M2 4.5H11M2 6.5H11M2 8.5H11" stroke="#e4ebf6" stroke-width="1"/></svg>
<svg class="r" style="left:1221px;top:738px" width="14" height="12" viewBox="0 0 14 12"><path d="M0.6 0.6H10.4V9.4H0.6Z" fill="none" stroke="#e8eef8" stroke-width="1"/><path d="M2.2 2.8H8.8M2.2 4.6H8.8M2.2 6.4H6" stroke="#e8eef8" stroke-width="0.8"/><circle cx="10" cy="8.4" r="2.9" fill="#2b579a" stroke="#e8eef8" stroke-width="0.9"/><path d="M7.2 8.4H12.8M10 5.6V11.2" stroke="#e8eef8" stroke-width="0.6"/></svg>
<div class="r" style="left:1248.6px;top:742.4px;width:5px;height:1.8px;background:#fff;"></div>
<div class="r" style="left:1257px;top:743.4px;width:88px;height:1px;background:#dfe7f3;"></div>
<div class="r" style="left:1280.2px;top:738.3px;width:3px;height:10.6px;background:#fff;"></div>
<div class="r" style="left:1301.5px;top:741.4px;width:1px;height:5px;background:#dfe7f3;"></div>
<div class="r" style="left:1348.6px;top:743px;width:7px;height:1.6px;background:#fff;"></div>
<div class="r" style="left:1351.3px;top:740.3px;width:1.6px;height:7px;background:#fff;"></div>
<div class="t" style='left:1368.60px;top:738px;font:400 10px "Liberation Sans", sans-serif;line-height:11px;color:#f3f6fb;transform:scaleX(0.8893);transform-origin:0 0;'>57%</div>
</div>
</body></html>
